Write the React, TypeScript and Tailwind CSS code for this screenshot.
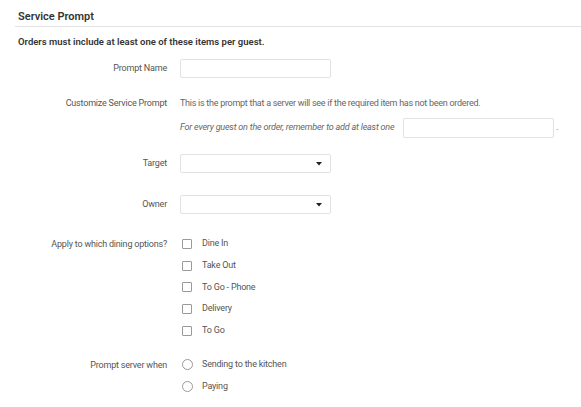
import React from 'react';

const font = { fontFamily: 'Roboto, "Liberation Sans", sans-serif' };

function Caret() {
  return (
    <svg width="6" height="4" viewBox="0 0 6 4" className="absolute right-[8px] top-1/2 -translate-y-1/2">
      <path d="M0 0h6L3 3.5z" fill="#222" />
    </svg>
  );
}

function Label({ children, className = '' }: { children: React.ReactNode; className?: string }) {
  return (
    <div className={`w-[167px] shrink-0 text-right text-[9px] tracking-[-0.2px] text-[#555] ${className}`}>
      {children}
    </div>
  );
}

export default function App() {
  const dining = ['Dine In', 'Take Out', 'To Go - Phone', 'Delivery', 'To Go'];
  const when = ['Sending to the kitchen', 'Paying'];

  return (
    <div className="w-[581px] h-[407px] bg-white overflow-hidden" style={font}>
      <div className="ml-[15px] border-b border-[#e3e3e3] h-[27px] flex items-end pb-[4px]">
        <span className="pl-[3px] text-[11px] font-semibold text-[#333] leading-none">Service Prompt</span>
      </div>

      <div className="pl-[18px] mt-[9px] text-[9.5px] font-semibold text-[#333] leading-[12px]">
        Orders must include at least one of these items per guest.
      </div>

      <div className="flex items-center gap-[13px] mt-[11px] h-[19px]">
        <Label>Prompt Name</Label>
        <div className="w-[151px] h-[19px] border border-[#e2e2e2] rounded-[2px]" />
      </div>

      <div className="flex items-center gap-[13px] mt-[20px] h-[12px]">
        <Label>Customize Service Prompt</Label>
        <div className="text-[9px] tracking-[-0.27px] text-[#666] whitespace-nowrap">
          This is the prompt that a server will see if the required item has not been ordered.
        </div>
      </div>

      <div className="flex items-center mt-[8px] h-[20px] pl-[180px]">
        <span className="w-[223px] text-[9px] italic tracking-[-0.2px] text-[#666] whitespace-nowrap">
          For every guest on the order, remember to add at least one
        </span>
        <div className="w-[151px] h-[20px] border border-[#e2e2e2] rounded-[2px] shrink-0" />
        <span className="ml-[2px] text-[9px] text-[#666]">.</span>
      </div>

      <div className="flex items-center gap-[13px] mt-[16px] h-[19px]">
        <Label>Target</Label>
        <div className="relative w-[151px] h-[19px] border border-[#e2e2e2] rounded-[2px]">
          <Caret />
        </div>
      </div>

      <div className="flex items-center gap-[13px] mt-[22px] h-[19px]">
        <Label>Owner</Label>
        <div className="relative w-[151px] h-[19px] border border-[#e2e2e2] rounded-[2px]">
          <Caret />
        </div>
      </div>

      <div className="flex gap-[13px] mt-[19px]">
        <Label className="leading-[22px]">Apply to which dining options?</Label>
        <div className="flex flex-col">
          {dining.map((d) => (
            <div key={d} className="flex items-center h-[21.75px]">
              <div className="ml-[2px] w-[10px] h-[10px] border border-[#9a9a9a] rounded-[1px]" />
              <span className="ml-[10px] text-[9px] tracking-[-0.2px] text-[#555]">{d}</span>
            </div>
          ))}
        </div>
      </div>

      <div className="flex gap-[13px] mt-[12px]">
        <Label className="leading-[22px]">Prompt server when</Label>
        <div className="flex flex-col">
          {when.map((w) => (
            <div key={w} className="flex items-center h-[22px]">
              <div className="ml-[2px] w-[11px] h-[11px] border border-[#9a9a9a] rounded-full" />
              <span className="ml-[9px] text-[9px] tracking-[-0.2px] text-[#555]">{w}</span>
            </div>
          ))}
        </div>
      </div>
    </div>
  );
}
